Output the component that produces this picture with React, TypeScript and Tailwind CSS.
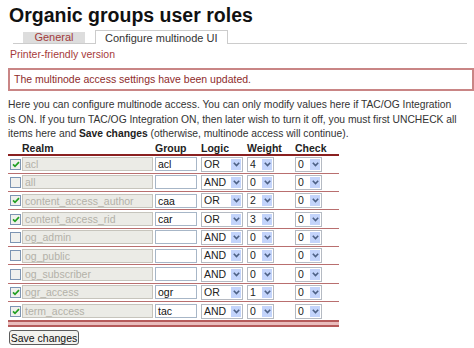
import React from "react";

type Row = { realm: string; on: boolean; group: string; logic: string; weight: string; check: string };

const rows: Row[] = [
  { realm: "acl", on: true, group: "acl", logic: "OR", weight: "4", check: "0" },
  { realm: "all", on: false, group: "", logic: "AND", weight: "0", check: "0" },
  { realm: "content_access_author", on: true, group: "caa", logic: "OR", weight: "2", check: "0" },
  { realm: "content_access_rid", on: true, group: "car", logic: "OR", weight: "3", check: "0" },
  { realm: "og_admin", on: false, group: "", logic: "AND", weight: "0", check: "0" },
  { realm: "og_public", on: false, group: "", logic: "AND", weight: "0", check: "0" },
  { realm: "og_subscriber", on: false, group: "", logic: "AND", weight: "0", check: "0" },
  { realm: "ogr_access", on: true, group: "ogr", logic: "OR", weight: "1", check: "0" },
  { realm: "term_access", on: true, group: "tac", logic: "AND", weight: "0", check: "0" },
];

function Chevron() {
  return (
    <span className="flex h-[11px] w-[10px] items-center justify-center bg-[#c3d4fb]">
      <svg width="7" height="5" viewBox="0 0 7 5">
        <path d="M0.8 0.8 L3.5 3.6 L6.2 0.8" fill="none" stroke="#4d6185" strokeWidth="1.6" />
      </svg>
    </span>
  );
}

function Select({ value, w }: { value: string; w: string }) {
  return (
    <div className={`flex h-[15px] items-center border border-[#b5bac2] bg-white pr-px ${w}`}>
      <span className="flex-1 pl-[2px] leading-[13px] text-[#222]">{value}</span>
      <Chevron />
    </div>
  );
}

function Check({ on }: { on: boolean }) {
  return (
    <div className="ml-[2px] flex h-[11px] w-[11px] items-center justify-center border border-[#7d95b3] bg-[#f1f1ee]">
      {on && (
        <svg width="8" height="7" viewBox="0 0 8 7">
          <path d="M1 3.4 L3 5.4 L7 1.2" fill="none" stroke="#22a022" strokeWidth="1.7" />
        </svg>
      )}
    </div>
  );
}

export default function App() {
  return (
    <div className="h-[348px] w-[474px] overflow-hidden bg-white font-['Liberation_Sans',Arial,sans-serif] text-[10.5px] text-[#333]">
      <h1 className="pl-[9px] pt-[4px] text-[19.5px] font-bold leading-[22px] text-[#111]">
        Organic groups user roles
      </h1>

      <div className="ml-[13px] mt-[5px] flex h-[13px] w-[454px] items-end gap-[10px] border-b border-[#cccccc] pl-[10px]">
        <div className="flex h-[11px] w-[62px] items-center justify-center bg-[#dddddd] text-[11px] leading-[11px] text-[#a33b3b]">
          General
        </div>
        <div className="-mb-px flex h-[14px] items-center border border-b-0 border-[#cccccc] bg-white px-[9px] text-[11px] leading-[12px] text-[#333]">
          Configure multinode UI
        </div>
      </div>

      <div className="ml-[10px] mt-[4px] leading-[13px] text-[#a63a3a]">Printer-friendly version</div>

      <div className="ml-[8px] mt-[7px] flex h-[23px] w-[466px] items-center border-2 border-[#c98585] pl-[4px] text-[#8e2b2b]">
        The multinode access settings have been updated.
      </div>

      <p className="ml-[8px] mt-[7px] whitespace-nowrap text-[10.3px] leading-[14.5px] text-[#333]">
        Here you can configure multinode access. You can only modify values here if TAC/OG Integration
        <br />
        is ON. If you turn TAC/OG Integration ON, then later wish to turn it off, you must first UNCHECK all
        <br />
        items here and <b className="text-[#222]">Save changes</b> (otherwise, multinode access will continue).
      </p>

      <div className="ml-[8px] w-[331px]">
        <div className="grid h-[14px] grid-cols-[14px_133px_46px_46px_48px_44px] items-center border-b-2 border-[#8a2020] pb-[2px] font-bold leading-[12px] text-[#222]">
          <span />
          <span>Realm</span>
          <span>Group</span>
          <span>Logic</span>
          <span>Weight</span>
          <span>Check</span>
        </div>
        {rows.map((r, i) => (
          <div
            key={r.realm}
            className={`grid h-[18.33px] grid-cols-[14px_133px_46px_46px_48px_44px] items-center ${
              i < rows.length - 1 ? "border-b border-[#b96f6f]" : ""
            }`}
          >
            <Check on={r.on} />
            <div className="flex h-[14px] w-[131px] items-center border border-[#c6c4bc] bg-[#ebebe6] pl-[2px] leading-[12px] text-[#b3b1a8]">
              {r.realm}
            </div>
            <div className="flex h-[14px] w-[42px] items-center border border-[#a7b6c7] bg-white pl-[2px] leading-[12px] text-[#111]">
              {r.group}
            </div>
            <Select value={r.logic} w="w-[42px]" />
            <Select value={r.weight} w="w-[27px]" />
            <Select value={r.check} w="w-[27px]" />
          </div>
        ))}
        <div className="h-[7px] border-y-2 border-[#b55a5a] bg-[#e9bcbc]" />
      </div>

      <button className="ml-[9px] mt-[3px] flex h-[15px] w-[70px] items-center justify-center rounded-[3px] border border-[#5c5c5c] bg-[#f2f2ee] leading-[12px] text-[#111]">
        Save changes
      </button>
    </div>
  );
}
